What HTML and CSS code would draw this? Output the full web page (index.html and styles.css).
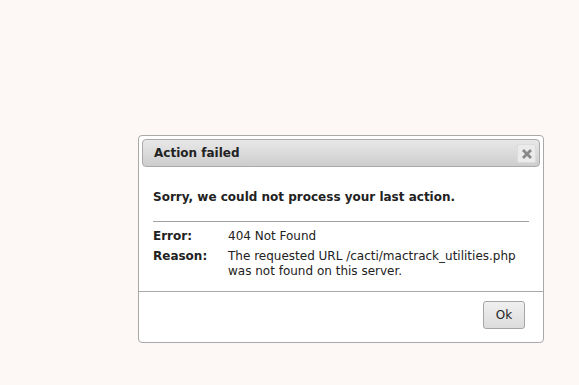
FILE: index.html
```html
<!DOCTYPE html>
<html>
<head>
<meta charset="utf-8">
<link rel="stylesheet" href="styles.css">
</head>
<body>
<div class="dialog">
  <div class="titlebar">
    <span class="title">Action failed</span>
    <span class="close" title="Close">
      <svg width="10" height="10" viewBox="0 0 10 10"><path d="M1 1 L9 9 M9 1 L1 9" stroke="#888" stroke-width="2.8" stroke-linecap="butt"/></svg>
    </span>
  </div>
  <div class="content">
    <p class="headline">Sorry, we could not process your last action.</p>
    <hr class="sep">
    <div class="details">
      <div class="label">Error:</div>
      <div class="value">404 Not Found</div>
      <div class="label">Reason:</div>
      <div class="value">The requested URL /cacti/mactrack_utilities.php<br>was not found on this server.</div>
    </div>
  </div>
  <div class="buttonpane">
    <button class="btn">Ok</button>
  </div>
</div>
</body>
</html>
```
FILE: styles.css
```css
html, body {
  margin: 0;
  padding: 0;
  height: 100%;
  background: #fdf8f6;
  font-family: "DejaVu Sans", Verdana, sans-serif;
  color: #222;
}
.dialog {
  position: absolute;
  left: 138px;
  top: 135px;
  width: 404px;
  height: 206px;
  border: 1px solid #a9a9a9;
  border-radius: 4px;
  background: #fff;
  display: flex;
  flex-direction: column;
}
.titlebar {
  margin: 3px 3px 0 3px;
  height: 26px;
  border: 1px solid #aaa;
  border-radius: 4px;
  background: linear-gradient(#e8e8e8, #cdcdcd);
  display: flex;
  align-items: center;
  justify-content: space-between;
  padding: 0 3px 0 11px;
}
.title {
  font-weight: bold;
  font-size: 12px;
  color: #222;
}
.close {
  width: 19px;
  height: 19px;
  box-sizing: border-box;
  border-radius: 2px;
  background: #ebebeb;
  border: 1px solid #dcdcdc;
  display: flex;
  align-items: center;
  justify-content: center;
  margin-top: 1px;
}
.content {
  flex: 1;
  padding: 0 14px 0 14px;
}
.headline {
  margin: 22px 0 0 0;
  font-weight: bold;
  font-size: 12px;
  line-height: 16px;
}
.sep {
  margin: 16px 0 0 0;
  border: 0;
  border-top: 1px solid #a0a0a0;
  height: 0;
}
.details {
  margin-top: 7px;
  display: grid;
  grid-template-columns: 75px 1fr;
  row-gap: 5px;
  font-size: 12px;
  line-height: 15px;
}
.label {
  font-weight: bold;
}
.buttonpane {
  border-top: 1px solid #aaa;
  display: flex;
  justify-content: flex-end;
  padding: 9px 18px 13px 0;
}
.btn {
  width: 42px;
  height: 28px;
  border: 1px solid #a5a5a5;
  border-radius: 3px;
  background: linear-gradient(#f0f0f0, #dcdcdc);
  font-family: "DejaVu Sans", Verdana, sans-serif;
  font-size: 12px;
  color: #222;
  padding: 0;
}
```
